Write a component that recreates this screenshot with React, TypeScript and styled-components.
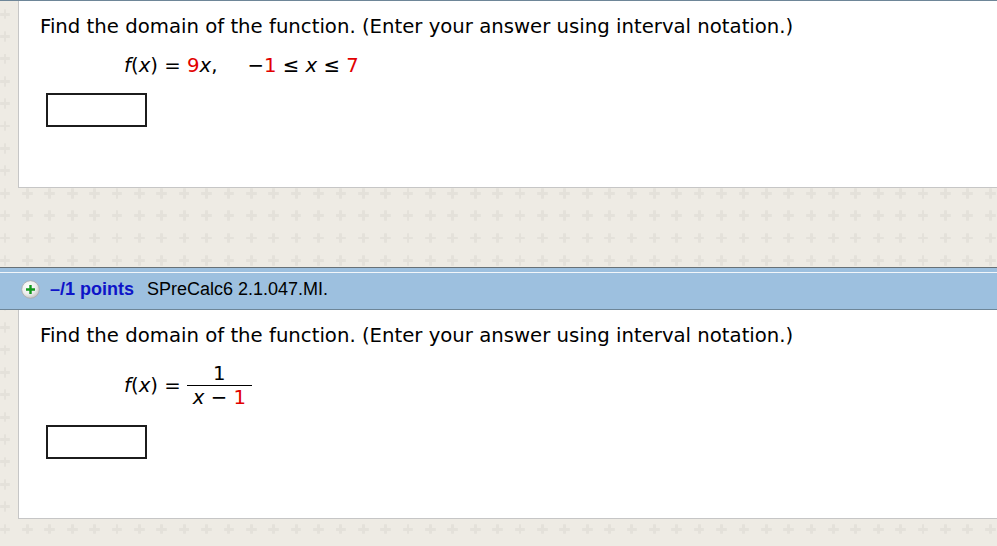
import styled, { createGlobalStyle } from "styled-components";

const plusTile =
  "data:image/svg+xml," +
  encodeURIComponent(
    "<svg xmlns='http://www.w3.org/2000/svg' width='22.4' height='22.4'><path d='M9.8 6h2.8v3.8h3.8v2.8h-3.8v3.8h-2.8v-3.8H6V9.8h3.8z' fill='#e4e1da'/></svg>",
  );

const GlobalStyle = createGlobalStyle`
  html, body {
    margin: 0;
    padding: 0;
  }
  body {
    width: 997px;
    height: 546px;
    overflow: hidden;
    background-color: #eeebe4;
    background-image: url("${plusTile}");
    background-position: -6.2px 2.9px;
    font-family: "DejaVu Sans", Verdana, sans-serif;
    color: #000;
  }
`;

const Section = styled.div`
  border-top: 1px solid #6e8698;
  padding-left: 18px;
`;

const Card = styled.div<{ $height: number }>`
  height: ${({ $height }) => $height}px;
  box-sizing: border-box;
  background: #fff;
  border-left: 1px solid #c6c6c6;
  border-bottom: 1px solid #c6c6c6;
  padding: 14px 0 0 21px;
`;

const Gap = styled.div`
  height: 79px;
`;

const QuestionHeader = styled.div`
  border-top: 1px solid #687176;
  background: #9dc0df;
  padding-top: 4px;
`;

const HeaderInner = styled.div`
  border-top: 1px solid #f2f6fa;
  height: 37px;
  display: flex;
  align-items: center;
  padding: 0 0 3px 21px;
  box-sizing: border-box;
  font-family: "Liberation Sans", Arial, sans-serif;
  font-size: 18px;
`;

const ExpandIcon = styled.svg`
  width: 19px;
  height: 19px;
  margin-right: 10px;
`;

const Points = styled.span`
  color: #0e14c8;
  font-weight: 700;
  margin-right: 13px;
`;

const Problem = styled.span`
  color: #000;
`;

const Prompt = styled.p`
  margin: 0;
  font-size: 19.7px;
  line-height: 23px;
`;

const Formula = styled.div<{ $top: number }>`
  display: flex;
  align-items: center;
  margin: ${({ $top }) => $top}px 0 0 84px;
  font-size: 19.7px;
  line-height: 23px;
  white-space: pre;
`;

const Var = styled.i`
  font-style: italic;
`;

const Red = styled.span`
  color: #e20000;
`;

const Spacer = styled.span`
  display: inline-block;
  width: 30px;
`;

const Fraction = styled.span`
  display: inline-flex;
  flex-direction: column;
  align-items: center;
  margin-left: 6px;
`;

const Numerator = styled.span`
  padding: 0 6px;
  border-bottom: 1px solid #000;
  align-self: stretch;
  text-align: center;
`;

const Denominator = styled.span`
  padding: 0 6px;
`;

const AnswerBox = styled.input<{ $top: number }>`
  display: block;
  box-sizing: border-box;
  width: 101px;
  height: 34px;
  margin: ${({ $top }) => $top}px 0 0 6px;
  border: 2px solid #1c1c1c;
  border-radius: 0;
  background: #fff;
  padding: 0 4px;
  font-size: 16px;
  outline: none;
`;

const PlusIcon = () => (
  <ExpandIcon viewBox="0 0 19 19">
    <defs>
      <radialGradient id="ib" cx="40%" cy="35%" r="70%">
        <stop offset="0%" stopColor="#ffffff" />
        <stop offset="60%" stopColor="#ececec" />
        <stop offset="100%" stopColor="#bdbdbd" />
      </radialGradient>
    </defs>
    <circle cx="9.5" cy="9.5" r="8.8" fill="url(#ib)" stroke="#a9a9a9" strokeWidth="0.8" />
    <path d="M8.3 5h2.4v3.3H14v2.4h-3.3V14H8.3v-3.3H5V8.3h3.3z" fill="#12981c" />
  </ExpandIcon>
);

const PROMPT =
  "Find the domain of the function. (Enter your answer using interval notation.)";

export default function App() {
  return (
    <>
      <GlobalStyle />
      <Section>
        <Card $height={187}>
          <Prompt>{PROMPT}</Prompt>
          <Formula $top={16}>
            <Var>f</Var>(<Var>x</Var>) = <Red>9</Red>
            <Var>x</Var>,<Spacer />−<Red>1</Red> ≤ <Var>x</Var> ≤ <Red>7</Red>
          </Formula>
          <AnswerBox $top={16} type="text" />
        </Card>
      </Section>
      <Gap />
      <QuestionHeader>
        <HeaderInner>
          <PlusIcon />
          <Points>–/1 points</Points>
          <Problem>SPreCalc6 2.1.047.MI.</Problem>
        </HeaderInner>
      </QuestionHeader>
      <Section>
        <Card $height={209}>
          <Prompt>{PROMPT}</Prompt>
          <Formula $top={15}>
            <Var>f</Var>(<Var>x</Var>) =
            <Fraction>
              <Numerator>1</Numerator>
              <Denominator>
                <Var>x</Var> − <Red>1</Red>
              </Denominator>
            </Fraction>
          </Formula>
          <AnswerBox $top={16} type="text" />
        </Card>
      </Section>
    </>
  );
}
